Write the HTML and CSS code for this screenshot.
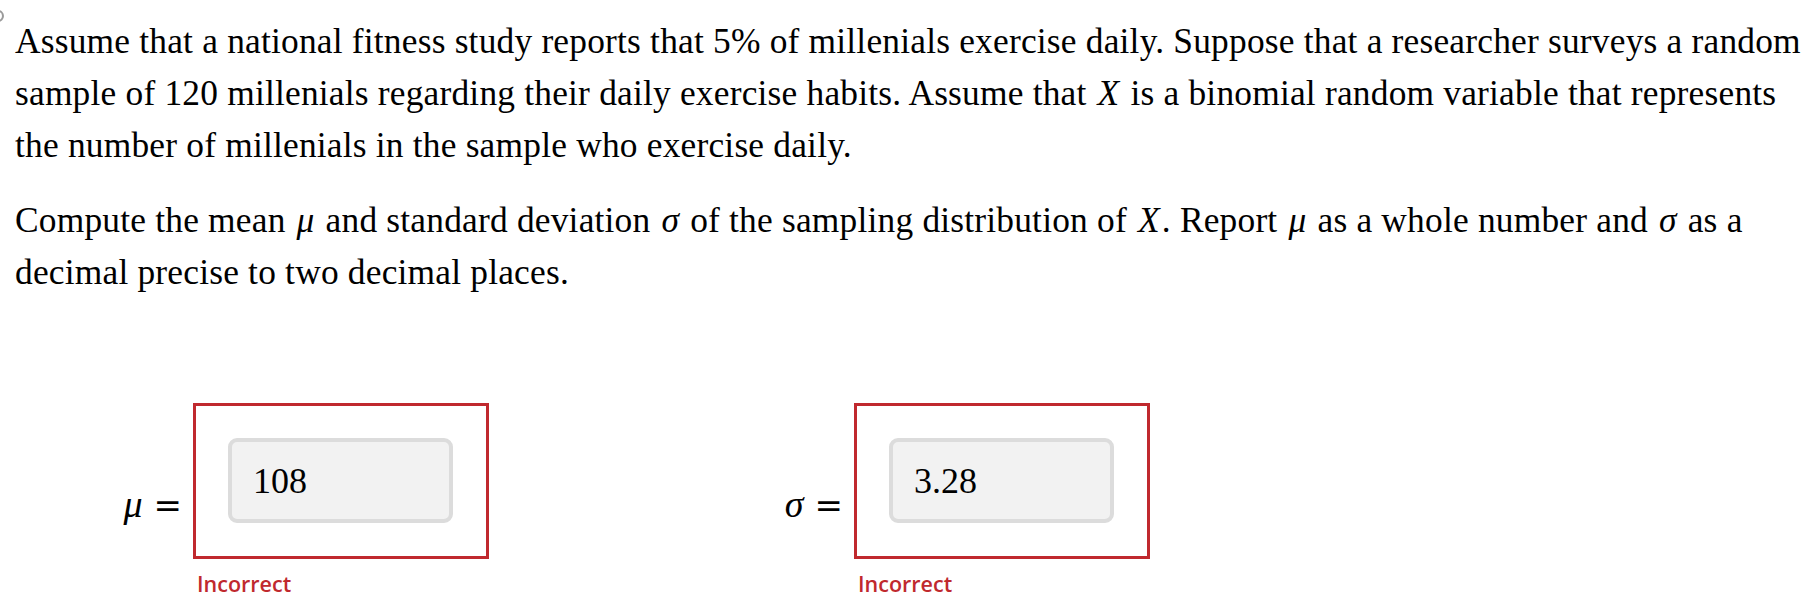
FILE: index.html
```html
<!DOCTYPE html>
<html>
<head>
<meta charset="utf-8">
<link rel="stylesheet" href="styles.css">
</head>
<body>
<div class="corner-mark"></div>
<main class="question">
  <p class="para">Assume that a national fitness study reports that 5% of millenials exercise daily. Suppose that a researcher surveys a random sample of 120 millenials regarding their daily exercise habits. Assume that <i class="m">X</i> is a binomial random variable that represents the number of millenials in the sample who exercise daily.</p>
  <p class="para">Compute the mean <i class="m">μ</i> and standard deviation <i class="m">σ</i> of the sampling distribution of <i class="m">X</i>. Report <i class="m">μ</i> as a whole number and <i class="m">σ</i> as a decimal precise to two decimal places.</p>

  <div class="answers">
    <div class="answer">
      <div class="label"><i class="sym">μ</i><span class="eq">=</span></div>
      <div class="box"><div class="input">108</div></div>
      <div class="feedback">Incorrect</div>
    </div>
    <div class="answer">
      <div class="label"><i class="sym">σ</i><span class="eq">=</span></div>
      <div class="box"><div class="input">3.28</div></div>
      <div class="feedback">Incorrect</div>
    </div>
  </div>
</main>
</body>
</html>
```

FILE: styles.css
```css
html, body {
  margin: 0;
  padding: 0;
  background: #ffffff;
}

body {
  position: relative;
  font-family: "Liberation Serif", "Times New Roman", serif;
  color: #000;
  overflow: hidden;
}

.corner-mark {
  position: absolute;
  left: -8px;
  top: 10px;
  width: 8px;
  height: 8px;
  border: 2px solid #9a9a9a;
  border-radius: 50%;
}

.question {
  padding: 15px 10px 0 15px;
}

.para {
  margin: 0 0 23px 0;
  font-size: 35.4px;
  letter-spacing: 0.2px;
  line-height: 52px;
}

.m {
  font-style: italic;
  padding: 0 2px;
}

.answers {
  display: flex;
  gap: 288px;
  margin-top: 105px;
  padding-left: 101px;
}

.answer {
  display: grid;
  grid-template-columns: 66px auto;
  column-gap: 11px;
}

.label {
  grid-column: 1;
  grid-row: 1;
  align-self: start;
  display: flex;
  justify-content: flex-end;
  align-items: baseline;
  gap: 11px;
  margin-top: 81px;
  height: 40px;
  line-height: 40px;
}

.sym {
  font-family: "Liberation Serif", serif;
  font-style: italic;
  font-size: 38px;
}

.eq {
  font-family: "DejaVu Serif", serif;
  font-size: 34px;
}

.box {
  grid-column: 2;
  grid-row: 1;
  border: 3px solid #c0292e;
  padding: 32px 33px 33px 32px;
}

.input {
  box-sizing: border-box;
  width: 225px;
  height: 85px;
  border: 4px solid #dcdcdc;
  border-radius: 9px;
  background: #f2f2f2;
  display: flex;
  align-items: center;
  padding-left: 21px;
  font-size: 36px;
}

.feedback {
  grid-column: 2;
  grid-row: 2;
  margin-top: 11px;
  padding-left: 4px;
  font-family: "Open Sans", "Liberation Sans", sans-serif;
  font-weight: 600;
  font-size: 21.5px;
  line-height: 28px;
  color: #c0292e;
}
```
